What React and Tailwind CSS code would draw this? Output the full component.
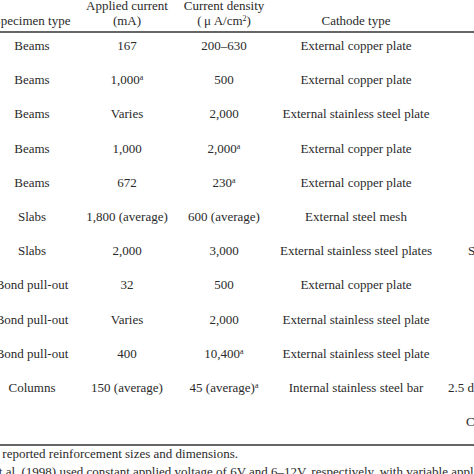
export default function App() {
    const rows = [
        { type: "Beams", current: "167", density: "200–630", cathode: "External copper plate" },
        { type: "Beams", current: "1,000", currentSup: true, density: "500", cathode: "External copper plate" },
        { type: "Beams", current: "Varies", density: "2,000", cathode: "External stainless steel plate" },
        { type: "Beams", current: "1,000", density: "2,000", densitySup: true, cathode: "External copper plate" },
        { type: "Beams", current: "672", density: "230", densitySup: true, cathode: "External copper plate" },
        { type: "Slabs", current: "1,800 (average)", density: "600 (average)", cathode: "External steel mesh" },
        { type: "Slabs", current: "2,000", density: "3,000", cathode: "External stainless steel plates", extra: "Several weeks", extraClass: "pl-[34px]" },
        { type: "Bond pull-out", current: "32", density: "500", cathode: "External copper plate" },
        { type: "Bond pull-out", current: "Varies", density: "2,000", cathode: "External stainless steel plate" },
        { type: "Bond pull-out", current: "400", density: "10,400", densitySup: true, cathode: "External stainless steel plate" },
        { type: "Columns", current: "150 (average)", density: "45 (average)", densitySup: true, cathode: "Internal stainless steel bar", extra: "2.5 days", extraClass: "pl-[14px]" },
        { type: "", current: "", density: "", cathode: "", extra: "Cathodic", extraClass: "pl-[32px]" }
    ];

    const grid = "grid grid-cols-[104px_86px_108px_156px_160px]";

    return (
        <div className="w-[474px] h-[474px] overflow-hidden bg-white text-[#2a2a2a] text-[13px] font-['Liberation_Serif','Times_New_Roman',serif]">
            <div className="w-[614px] -ml-[20px]">
                {/* header */}
                <div className={grid + " -mt-[2px] leading-[15px] pb-[3px] whitespace-nowrap"}>
                    <div className="text-center pt-[15px]">Specimen type</div>
                    <div className="text-center">
                        <div>Applied current</div>
                        <div>(mA)</div>
                    </div>
                    <div className="text-center">
                        <div>Current density</div>
                        <div>(&#8201;μ&#8201;A/cm<sup className="text-[8px]">2</sup>)</div>
                    </div>
                    <div className="text-center pt-[15px]">Cathode type</div>
                    <div></div>
                </div>
                <div className="h-[2px] bg-[#666]"></div>

                {/* body */}
                <div className="pt-[1px]">
                    {rows.map((row, i) =>
                        <div key={i} className={grid + " h-[34.2px] pt-[4px] leading-[15px] whitespace-nowrap"}>
                            <div className="text-center">{row.type}</div>
                            <div className="text-center">
                                {row.current}
                                {row.currentSup && <sup className="text-[8px]">a</sup>}
                            </div>
                            <div className="text-center">
                                {row.density}
                                {row.densitySup && <sup className="text-[8px]">a</sup>}
                            </div>
                            <div className="text-center">{row.cathode}</div>
                            <div className={row.extraClass}>{row.extra}</div>
                        </div>
                    )}
                </div>
                <div className="h-[2px] bg-[#666]"></div>
            </div>

            {/* footnotes */}
            <div className="leading-[18px] whitespace-nowrap -mt-[1px]">
                <div className="-ml-[24px]"><sup className="text-[8px]">a</sup>Not reported reinforcement sizes and dimensions.</div>
                <div className="-ml-[7px]">et al. (1998) used constant applied voltage of 6V and 6–12V, respectively, with variable applied current.</div>
            </div>
        </div>
    );
}
